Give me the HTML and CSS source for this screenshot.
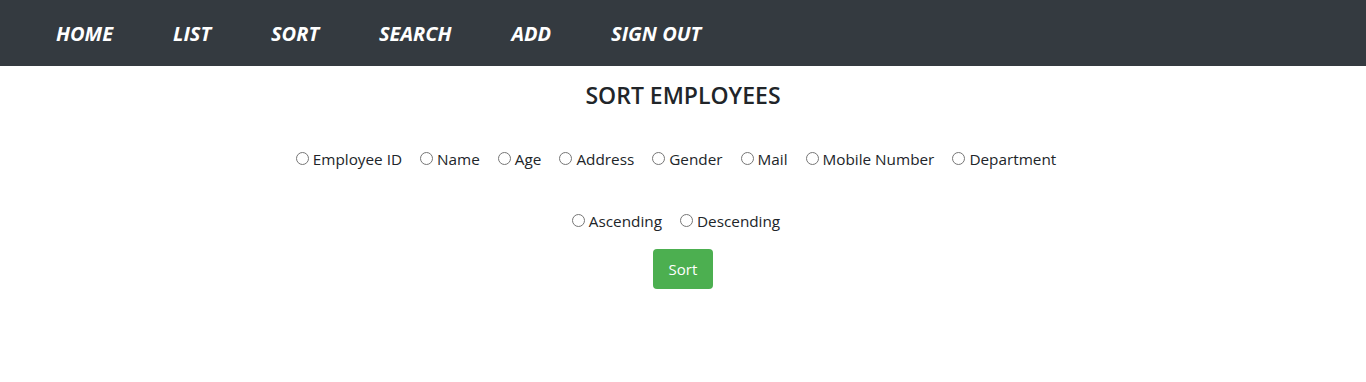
FILE: index.html
```html
<!DOCTYPE html>
<html>
<head>
<meta charset="utf-8">
<link rel="stylesheet" href="styles.css">
</head>
<body>
<nav class="navbar">
  <a class="nav-link" href="#">HOME</a>
  <a class="nav-link" href="#">LIST</a>
  <a class="nav-link" href="#">SORT</a>
  <a class="nav-link" href="#">SEARCH</a>
  <a class="nav-link" href="#">ADD</a>
  <a class="nav-link" href="#">SIGN OUT</a>
</nav>
<main class="content">
  <h4 class="title">SORT EMPLOYEES</h4>
  <form class="sort-form">
    <div class="radio-row fields">
      <label class="opt"><input type="radio" name="field"><span>Employee ID</span></label>
      <label class="opt"><input type="radio" name="field"><span>Name</span></label>
      <label class="opt"><input type="radio" name="field"><span>Age</span></label>
      <label class="opt"><input type="radio" name="field"><span>Address</span></label>
      <label class="opt"><input type="radio" name="field"><span>Gender</span></label>
      <label class="opt"><input type="radio" name="field"><span>Mail</span></label>
      <label class="opt"><input type="radio" name="field"><span>Mobile Number</span></label>
      <label class="opt"><input type="radio" name="field"><span>Department</span></label>
    </div>
    <div class="radio-row order">
      <label class="opt"><input type="radio" name="order"><span>Ascending</span></label>
      <label class="opt"><input type="radio" name="order"><span>Descending</span></label>
    </div>
    <button type="button" class="btn-sort">Sort</button>
  </form>
</main>
</body>
</html>
```
FILE: styles.css
```css
html, body {
  margin: 0;
  padding: 0;
  background: #fff;
  font-family: "Open Sans", "Noto Sans", sans-serif;
  color: #212529;
}
.navbar {
  height: 66px;
  background: #343a40;
  display: flex;
  align-items: center;
  padding-left: 56px;
  gap: 60px;
  box-sizing: border-box;
}
.nav-link {
  color: #fff;
  text-decoration: none;
  font-weight: 700;
  font-style: italic;
  font-size: 20px;
  line-height: 1;
  padding-top: 2px;
}
.content {
  display: flex;
  flex-direction: column;
  align-items: center;
}
.title {
  margin: 15px 0 0;
  font-size: 23px;
  font-weight: 600;
  line-height: 28px;
  color: #212529;
}
.sort-form {
  display: flex;
  flex-direction: column;
  align-items: center;
}
.radio-row {
  display: flex;
  align-items: center;
  gap: 18px;
  font-size: 15.3px;
  line-height: 20px;
  padding-right: 14px;
}
.fields { margin-top: 40px; }
.order { margin-top: 42px; }
.opt {
  display: flex;
  align-items: center;
}
.opt input {
  width: 13px;
  height: 13px;
  margin: 0 4px 2px 0;
}
.btn-sort {
  margin-top: 18px;
  width: 60px;
  height: 40px;
  border: none;
  border-radius: 4px;
  background: #4caf50;
  color: #fff;
  font-family: inherit;
  font-size: 15px;
  padding: 0;
}
```
